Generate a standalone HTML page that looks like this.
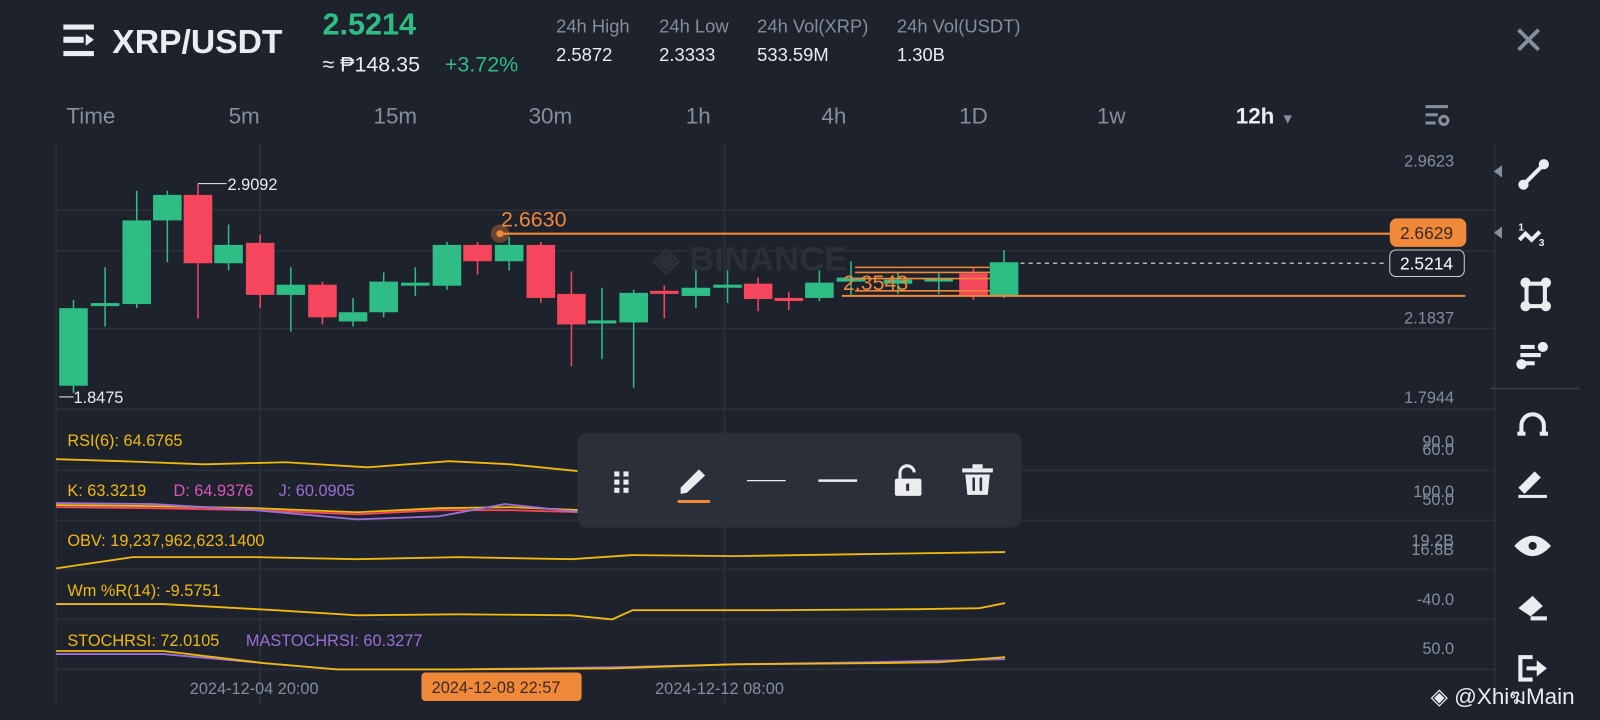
<!DOCTYPE html>
<html><head><meta charset="utf-8"><style>
html,body{margin:0;width:1600px;height:720px;background:#1e222c;overflow:hidden}
#w{position:absolute;left:0;top:0;width:1568px;height:706px;transform:scale(1.0204);transform-origin:0 0;font-family:"Liberation Sans",sans-serif;color:#eaecef}
.a{position:absolute;white-space:nowrap}
.g{color:#2ebd85}
.lbl{color:#848e9c;font-size:18px}
.val{color:#eaecef;font-size:18px}
.tf{position:absolute;top:101px;font-size:22px;color:#848e9c}
</style></head><body><div id="w">
<svg class="a" style="left:62px;top:24px" width="34" height="32"><rect x="0" y="0" width="30" height="5" fill="#eaecef"/><rect x="0" y="12" width="20" height="6" fill="#eaecef"/><path d="M22 9 L30 15 L22 21Z" fill="#eaecef"/><rect x="0" y="26" width="30" height="5" fill="#eaecef"/></svg>
<div class="a" style="left:110px;top:22px;font-size:33px;font-weight:bold">XRP/USDT</div>
<div class="a g" style="left:316px;top:8px;font-size:30px;font-weight:bold">2.5214</div>
<div class="a" style="left:316px;top:52px;font-size:21px">≈ ₱148.35</div>
<div class="a g" style="left:436px;top:52px;font-size:21px">+3.72%</div>
<div class="a lbl" style="left:545px;top:16px">24h High</div><div class="a val" style="left:545px;top:44px">2.5872</div>
<div class="a lbl" style="left:646px;top:16px">24h Low</div><div class="a val" style="left:646px;top:44px">2.3333</div>
<div class="a lbl" style="left:742px;top:16px">24h Vol(XRP)</div><div class="a val" style="left:742px;top:44px">533.59M</div>
<div class="a lbl" style="left:879px;top:16px">24h Vol(USDT)</div><div class="a val" style="left:879px;top:44px">1.30B</div>
<div class="a" style="left:1482px;top:18px;font-size:38px;color:#848e9c">✕</div>
<div class="tf" style="left:65px">Time</div><div class="tf" style="left:224px">5m</div><div class="tf" style="left:366px">15m</div><div class="tf" style="left:518px">30m</div><div class="tf" style="left:672px">1h</div><div class="tf" style="left:805px">4h</div><div class="tf" style="left:940px">1D</div><div class="tf" style="left:1075px">1w</div>
<div class="tf" style="left:1211px;color:#eaecef;font-weight:bold">12h <span style="font-size:14px;color:#848e9c">▼</span></div>
<svg class="a" style="left:1396px;top:100px" width="26" height="26"><rect x="1" y="3" width="22" height="3" fill="#848e9c"/><rect x="1" y="11" width="12" height="3" fill="#848e9c"/><rect x="1" y="19" width="10" height="3" fill="#848e9c"/><circle cx="19" cy="18" r="4" stroke="#848e9c" stroke-width="3" fill="none"/></svg>

<svg class="a" style="left:0;top:0" width="1568" height="706">
<g stroke="#2b303b" stroke-width="1.5">
<line x1="55" y1="140" x2="55" y2="690"/><line x1="255" y1="140" x2="255" y2="690"/><line x1="710" y1="140" x2="710" y2="690"/><line x1="1465" y1="140" x2="1465" y2="690"/>
<line x1="55" y1="206" x2="1465" y2="206"/><line x1="55" y1="246" x2="1465" y2="246"/><line x1="55" y1="322" x2="1465" y2="322"/><line x1="55" y1="401" x2="1465" y2="401"/>
<line x1="55" y1="461" x2="1465" y2="461"/><line x1="55" y1="510" x2="1465" y2="510"/><line x1="55" y1="558" x2="1465" y2="558"/><line x1="55" y1="607" x2="1465" y2="607"/><line x1="55" y1="656" x2="1465" y2="656"/>
</g>
<text x="640" y="265" font-size="34" font-weight="bold" fill="#2a2f3a" font-family="Liberation Sans">◈ BINANCE</text>
<g id="c"></g>
<g stroke-width="2">
<line x1="490" y1="229" x2="1430" y2="229" stroke="#f0883a"/>
<line x1="825" y1="290" x2="1436" y2="290" stroke="#f0883a"/>
<line x1="838" y1="262" x2="970" y2="262" stroke="#f0883a" stroke-width="1.5"/><line x1="838" y1="267" x2="970" y2="267" stroke="#f0883a" stroke-width="1.5"/><line x1="838" y1="273" x2="970" y2="273" stroke="#f0883a" stroke-width="1.5"/><line x1="838" y1="285" x2="970" y2="285" stroke="#f0883a" stroke-width="1.5"/>
<line x1="1000" y1="258" x2="1360" y2="258" stroke="#c8ccd4" stroke-width="1.2" stroke-dasharray="4 4"/>
</g>
<circle cx="490" cy="229" r="9" fill="#f0883a" opacity=".35"/><circle cx="490" cy="229" r="3.5" fill="#f0883a"/>
<text x="491" y="222" font-size="21" fill="#f0883a">2.6630</text>
<text x="826" y="284" font-size="21" fill="#f0883a">2.3543</text>
<line x1="194" y1="180" x2="222" y2="180" stroke="#eaecef"/><text x="223" y="186" font-size="16" fill="#eaecef">2.9092</text>
<line x1="58" y1="389" x2="72" y2="389" stroke="#eaecef"/><text x="72" y="395" font-size="16" fill="#eaecef">1.8475</text>
<g font-size="16" fill="#848e9c" text-anchor="end">
<text x="1425" y="163">2.9623</text><text x="1425" y="317">2.1837</text><text x="1425" y="395">1.7944</text>
<text x="1425" y="438">90.0</text><text x="1425" y="446">60.0</text><text x="1425" y="487">100.0</text><text x="1425" y="495">50.0</text>
<text x="1425" y="535">19.2B</text><text x="1425" y="544">16.8B</text><text x="1425" y="593">-40.0</text><text x="1425" y="641">50.0</text>
</g>
<rect x="1362" y="214" width="75" height="28" rx="7" fill="#f0883a"/><text x="1372" y="234" font-size="17" fill="#3a2a1a">2.6629</text>
<rect x="1362" y="245" width="73" height="26" rx="6" fill="#1e222c" stroke="#c8ccd4"/><text x="1372" y="264" font-size="17" fill="#fff">2.5214</text>
<g fill="none" stroke-width="1.8">
<polyline stroke="#f0b90b" points="55,450 120,452 200,455 280,453 360,458 440,452 500,455 570,462"/>
<polyline stroke="#f6465d" points="55,497 150,498 250,500 350,504 430,500 500,500 570,502"/>
<polyline stroke="#f0b90b" points="55,495 150,496 250,498 350,502 430,498 500,497 570,500"/>
<polyline stroke="#9b6fd6" points="55,493 150,494 250,500 350,509 430,506 495,494 570,502"/>
<polyline stroke="#f0b90b" points="55,557 130,546 250,546 350,548 450,546 560,548 620,544 720,545 850,543 985,541"/>
<polyline stroke="#f0b90b" points="55,592 160,592 270,598 350,603 450,602 560,603 600,607 620,598 760,598 900,597 960,596 985,591"/>
<polyline stroke="#9b6fd6" points="55,641 160,641 260,650 330,656 450,656 600,654 720,651 850,649 985,646"/>
<polyline stroke="#f0b90b" points="55,638 160,638 260,650 330,656 450,656 600,655 720,651 850,650 920,649 985,644"/>
</g>
<g font-size="16"><text x="66" y="437" fill="#f0b90b">RSI(6): 64.6765</text>
<text x="66" y="486" fill="#f0b90b">K: 63.3219</text><text x="170" y="486" fill="#d957b8">D: 64.9376</text><text x="273" y="486" fill="#9b6fd6">J: 60.0905</text>
<text x="66" y="535" fill="#f0b90b">OBV: 19,237,962,623.1400</text><text x="66" y="584" fill="#f0b90b">Wm %R(14): -9.5751</text>
<text x="66" y="633" fill="#f0b90b">STOCHRSI: 72.0105</text><text x="241" y="633" fill="#9b6fd6">MASTOCHRSI: 60.3277</text>
<text x="186" y="680" fill="#848e9c">2024-12-04 20:00</text><text x="642" y="680" fill="#848e9c">2024-12-12 08:00</text></g>
<rect x="413" y="659" width="157" height="28" rx="4" fill="#f0883a"/><text x="423" y="679" font-size="16" fill="#3a2a1a">2024-12-08 22:57</text>
<rect x="566" y="424" width="435" height="93" rx="9" fill="#2b2f3a"/>
<g fill="#eaecef"><rect x="602" y="462" width="5" height="5"/><rect x="611" y="462" width="5" height="5"/><rect x="602" y="470" width="5" height="5"/><rect x="611" y="470" width="5" height="5"/><rect x="602" y="478" width="5" height="5"/><rect x="611" y="478" width="5" height="5"/></g>
<path d="M667 478 L685 460 L691 466 L673 483 L667 484Z" fill="#eaecef"/><rect x="664" y="490" width="32" height="3" rx="1" fill="#f0883a"/>
<line x1="732" y1="471" x2="770" y2="471" stroke="#eaecef" stroke-width="1.2"/><line x1="802" y1="471" x2="840" y2="471" stroke="#eaecef" stroke-width="2.5"/>
<rect x="877" y="469" width="26" height="17" rx="2" fill="#eaecef"/><path d="M882 469 v-5 a7 7 0 0 1 14 -1" stroke="#eaecef" stroke-width="3" fill="none"/><rect x="888" y="474" width="3" height="7" fill="#2b2f3a"/>
<rect x="943" y="459" width="30" height="4" fill="#eaecef"/><rect x="953" y="455" width="10" height="4" fill="#eaecef"/><path d="M946 465 h24 l-2 20 h-20z" fill="#eaecef"/><rect x="953" y="468" width="2.5" height="13" fill="#2b2f3a"/><rect x="960" y="468" width="2.5" height="13" fill="#2b2f3a"/>
<g fill="#848e9c"><path d="M1472 162 L1464 168 L1472 174Z"/><path d="M1472 222 L1464 228 L1472 234Z"/></g>
<g stroke="#eaecef" stroke-width="4" fill="none"><line x1="1494" y1="180" x2="1512" y2="162"/><rect x="1496" y="278" width="18" height="22"/><line x1="1490" y1="340" x2="1504" y2="340"/><line x1="1490" y1="348" x2="1510" y2="348"/><line x1="1490" y1="356" x2="1504" y2="356"/>
<path d="M1491 425 v-8 a11 11 0 0 1 22 0 v8"/><path d="M1489 235 l6 -6 l6 6 l8 -8"/></g>
<g fill="#eaecef"><circle cx="1493" cy="181" r="5"/><circle cx="1513" cy="161" r="5"/><circle cx="1495" cy="277" r="5"/><circle cx="1515" cy="277" r="5"/><circle cx="1495" cy="300" r="5"/><circle cx="1515" cy="300" r="5"/><circle cx="1512" cy="340" r="5"/><circle cx="1491" cy="357" r="5"/>
<text x="1488" y="226" font-size="10" font-weight="bold">1</text><text x="1508" y="241" font-size="10" font-weight="bold">3</text>
<rect x="1487" y="423" width="8" height="4"/><rect x="1509" y="423" width="8" height="4"/>
<path d="M1488 478 L1504 462 L1510 468 L1494 484Z"/><rect x="1488" y="485" width="28" height="3"/>
<path d="M1484 535 Q1502 515 1520 535 Q1502 555 1484 535Z"/><circle cx="1502" cy="535" r="4" fill="#1e222c"/>
<path d="M1488 596 L1502 584 L1512 594 L1500 604Z"/><rect x="1500" y="604" width="16" height="4"/>
<path d="M1488 642 h14 v4 h-10 v18 h10 v4 h-14z"/><path d="M1496 653 h10 v-6 l10 8 l-10 8 v-6 h-10z"/>
<rect x="1460" y="380" width="88" height="1.5" fill="#3a3f4b"/></g>
<text x="1402" y="690" font-size="22" fill="#eaecef">◈ @XhiฆMain</text>
</svg>
</div>
<script>
var d=[[72,302,378,294,385,1],[103,297,300,262,320,1],[134,216,298,187,302,1],[164,191,216,187,257,1],[194,191,258,180,312,0],[224,240,258,220,265,1],[255,238,289,230,302,0],[285,279,289,262,325,1],[316,279,311,276,318,0],[346,306,315,292,320,1],[376,276,306,267,311,1],[407,277,280,262,290,1],[438,240,280,237,284,1],[468,240,256,237,269,0],[499,240,256,232,265,1],[530,240,292,237,297,0],[560,288,318,266,359,0],[590,314,317,282,352,1],[621,287,316,284,380,1],[651,285,288,280,312,0],[682,282,290,265,302,1],[713,279,282,265,297,1],[743,278,293,272,305,0],[773,292,295,286,304,0],[803,277,292,265,295,1],[834,272,276,256,290,1],[880,274,278,266,288,1],[920,273,276,268,288,1],[954,268,290,262,294,0],[984,257,290,245,292,1]];
var s='';d.forEach(function(c){var col=c[5]?'#2ebd85':'#f6465d';s+='<line x1="'+c[0]+'" y1="'+c[3]+'" x2="'+c[0]+'" y2="'+c[4]+'" stroke="'+col+'" stroke-width="1.5"/><rect x="'+(c[0]-14)+'" y="'+c[1]+'" width="28" height="'+Math.max(3,c[2]-c[1])+'" fill="'+col+'"/>';});
document.getElementById('c').innerHTML=s;
</script>
</body></html>
